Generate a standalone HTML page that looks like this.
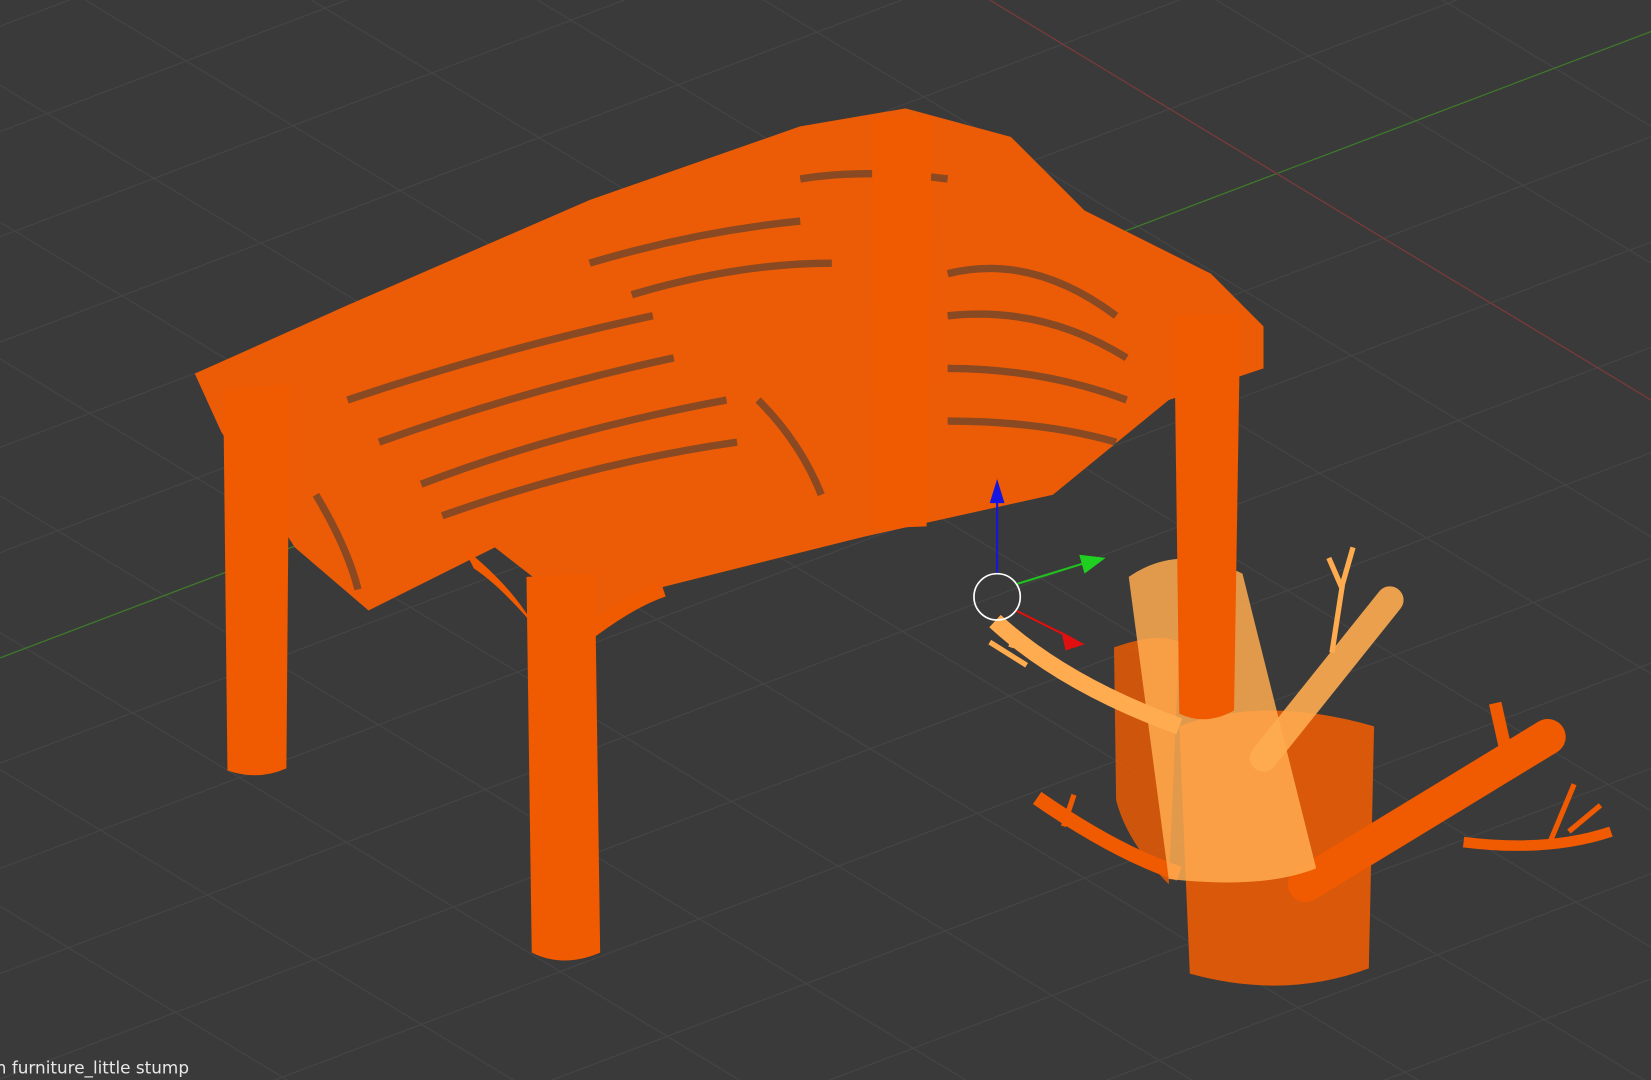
<!DOCTYPE html>
<html><head><meta charset="utf-8"><style>
html,body{margin:0;padding:0;background:#3a3a3a;overflow:hidden;width:1651px;height:1080px}
svg{display:block}
</style></head><body>
<svg width="1651" height="1080" viewBox="0 0 1568 1026" preserveAspectRatio="none" xmlns="http://www.w3.org/2000/svg">
<rect width="1568" height="1026" fill="#3a3a3a"/>
<g stroke="#444444" stroke-width="1.2">
<line x1="0" y1="-75" x2="1568" y2="-670"/>
<line x1="0" y1="25" x2="1568" y2="-570"/>
<line x1="0" y1="125" x2="1568" y2="-470"/>
<line x1="0" y1="225" x2="1568" y2="-370"/>
<line x1="0" y1="325" x2="1568" y2="-270"/>
<line x1="0" y1="425" x2="1568" y2="-170"/>
<line x1="0" y1="525" x2="1568" y2="-70"/>
<line x1="0" y1="725" x2="1568" y2="130"/>
<line x1="0" y1="825" x2="1568" y2="230"/>
<line x1="0" y1="925" x2="1568" y2="330"/>
<line x1="0" y1="1025" x2="1568" y2="430"/>
<line x1="0" y1="1125" x2="1568" y2="530"/>
<line x1="0" y1="1225" x2="1568" y2="630"/>
<line x1="0" y1="1325" x2="1568" y2="730"/>
<line x1="0" y1="1425" x2="1568" y2="830"/>
<line x1="0" y1="1525" x2="1568" y2="930"/>
<line x1="0" y1="1625" x2="1568" y2="1030"/>
<line x1="0" y1="-829" x2="1568" y2="120"/>
<line x1="0" y1="-699" x2="1568" y2="250"/>
<line x1="0" y1="-439" x2="1568" y2="510"/>
<line x1="0" y1="-309" x2="1568" y2="640"/>
<line x1="0" y1="-179" x2="1568" y2="770"/>
<line x1="0" y1="-49" x2="1568" y2="900"/>
<line x1="0" y1="81" x2="1568" y2="1030"/>
<line x1="0" y1="211" x2="1568" y2="1160"/>
<line x1="0" y1="341" x2="1568" y2="1290"/>
<line x1="0" y1="471" x2="1568" y2="1420"/>
<line x1="0" y1="601" x2="1568" y2="1550"/>
<line x1="0" y1="731" x2="1568" y2="1680"/>
<line x1="0" y1="861" x2="1568" y2="1810"/>
</g>
<line x1="0" y1="625" x2="1568" y2="30" stroke="#3f7a2a" stroke-width="1.2"/>
<line x1="940" y1="0" x2="1568" y2="380" stroke="#7a3a3a" stroke-width="1.2"/>
<!-- table top -->
<polygon points="185,355 330,290 560,190 760,120 860,103 960,130 1030,200 1150,260 1200,310 1200,350 1110,380 1000,470 820,510 620,560 560,590 470,520 350,580 280,520 210,410" fill="#ec5c06"/>
<g stroke="#3a3a3a" stroke-width="7" opacity="0.55" fill="none">
<path d="M330,380 Q480,330 620,300"/><path d="M360,420 Q500,370 640,340"/><path d="M400,460 Q530,410 690,380"/>
<path d="M420,490 Q560,440 700,420"/>
<path d="M560,250 Q660,220 760,210"/><path d="M600,280 Q700,250 790,250"/>
<path d="M900,260 Q980,240 1060,300"/><path d="M900,300 Q990,290 1070,340"/><path d="M900,350 Q990,350 1070,380"/>
<path d="M900,400 Q990,400 1060,420"/>
<path d="M720,380 Q760,420 780,470"/><path d="M300,470 Q330,520 340,560"/>
<path d="M760,170 Q820,160 900,170"/>
</g>
<!-- legs -->
<path d="M212,370 L275,365 L272,730 Q245,742 216,732 Z" fill="#f05a00"/>
<path d="M500,548 L565,545 L570,905 Q535,920 505,905 Z" fill="#f05a00"/>
<path d="M440,520 Q490,560 510,600 L520,610 Q480,560 450,540 Z" fill="#f05a00"/>
<path d="M560,600 Q600,570 630,560" stroke="#f05a00" stroke-width="14" fill="none"/>
<path d="M828,112 L885,110 L880,500 L830,502 Z" fill="#f05a00"/>
<!-- dark stump -->
<path d="M1120,690 Q1200,660 1305,690 L1300,920 Q1220,950 1130,925 Z" fill="#ec5c05" opacity="0.9"/>
<path d="M1058,615 Q1100,600 1120,610 L1110,840 Q1070,800 1060,760 Z" fill="#e85a05" opacity="0.85"/>
<path d="M1240,840 L1470,700" stroke="#f05a00" stroke-width="34" stroke-linecap="round"/>
<path d="M1420,668 L1435,735" stroke="#f05a00" stroke-width="12"/>
<path d="M1390,800 Q1470,810 1530,790" stroke="#f05a00" stroke-width="10" fill="none"/>
<path d="M1470,805 L1495,745 M1490,790 L1520,765" stroke="#f05a00" stroke-width="5"/>
<path d="M985,758 Q1060,810 1120,830" stroke="#f05a00" stroke-width="14" fill="none"/>
<path d="M1010,785 L1020,755" stroke="#f05a00" stroke-width="5"/>
<!-- light stump -->
<path d="M1072,548 Q1120,515 1180,545 L1250,825 Q1200,845 1110,835 Z" fill="#ffac50" opacity="0.85"/>
<path d="M1200,720 L1320,570" stroke="#ffac50" stroke-width="26" stroke-linecap="round" opacity="0.9"/>
<path d="M1265,620 L1275,555 L1285,520 M1275,560 L1262,530" stroke="#ffac50" stroke-width="5" fill="none"/>
<path d="M945,590 Q1010,650 1120,690" stroke="#ffac50" stroke-width="16" fill="none"/>
<path d="M940,610 L975,632 M960,615 L965,600" stroke="#ffac50" stroke-width="5"/>
<!-- right leg over stump -->
<path d="M1115,300 L1178,298 L1172,675 Q1145,690 1120,678 Z" fill="#f05a00"/>
<!-- gizmo -->
<line x1="947" y1="545" x2="947" y2="470" stroke="#1515e0" stroke-width="2"/>
<polygon points="940,478 947,455 954,478" fill="#1515e0"/>
<line x1="965" y1="555" x2="1030" y2="535" stroke="#20c020" stroke-width="2"/>
<polygon points="1025,527 1050,530 1030,545" fill="#20d020"/>
<line x1="965" y1="580" x2="1015" y2="605" stroke="#e01010" stroke-width="2"/>
<polygon points="1008,600 1030,612 1012,618" fill="#e01010"/>
<circle cx="947" cy="567" r="22" fill="none" stroke="#ffffff" stroke-width="1.6"/>
<text x="-4" y="1020" font-family="'DejaVu Sans','Liberation Sans',sans-serif" font-size="16" fill="#e8e8e8">n furniture_little stump</text>
</svg>
</body></html>
